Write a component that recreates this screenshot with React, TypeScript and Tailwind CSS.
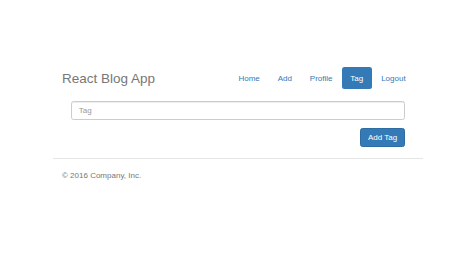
import React from "react";

export default function App() {
  const links = ["Home", "Add", "Profile", "Tag", "Logout"];
  return (
    <div className="w-full min-h-[278px] bg-white pl-[2px]" style={{ fontFamily: '"Liberation Sans", Arial, Helvetica, sans-serif' }}>
      <div className="w-[370px] mx-auto pt-[67px]">
        <div className="flex items-center justify-between px-[9px]">
          <h3 className="m-0 text-[13.5px] leading-[15px] text-[#777] font-normal">React Blog App</h3>
          <nav className="flex gap-[1.1px]">
            {links.map((l) =>
              l === "Tag" ? (
                <a key={l} className="px-[8.4px] py-[5.6px] text-[8px] leading-[11.25px] rounded-[2.5px] bg-[#337ab7] text-white">
                  {l}
                </a>
              ) : (
                <a key={l} className="px-[8.4px] py-[5.6px] text-[8px] leading-[11.25px] rounded-[2.5px] text-[#337ab7]">
                  {l}
                </a>
              )
            )}
          </nav>
        </div>
        <div className="mt-[12px] pl-[18px] pr-[18px] flex flex-col">
          <input
            placeholder="Tag"
            className="w-full h-[19px] px-[6.75px] text-[8px] text-[#555] placeholder:text-[#999] border border-[#ccc] rounded-[2.5px] shadow-[inset_0_1px_1px_rgba(0,0,0,0.075)] outline-none bg-white"
          />
          <div className="flex justify-end mt-[8px]">
            <button className="h-[19px] px-[6.75px] text-[8px] leading-[11px] text-white bg-[#337ab7] border border-[#2e6da4] rounded-[2.5px]">
              Add Tag
            </button>
          </div>
        </div>
        <div className="mt-[11px] border-t border-[#e5e5e5] pt-[10.7px] px-[9px]">
          <p className="m-0 text-[8px] leading-[11.25px] text-[#777]">© 2016 Company, Inc.</p>
        </div>
      </div>
    </div>
  );
}
